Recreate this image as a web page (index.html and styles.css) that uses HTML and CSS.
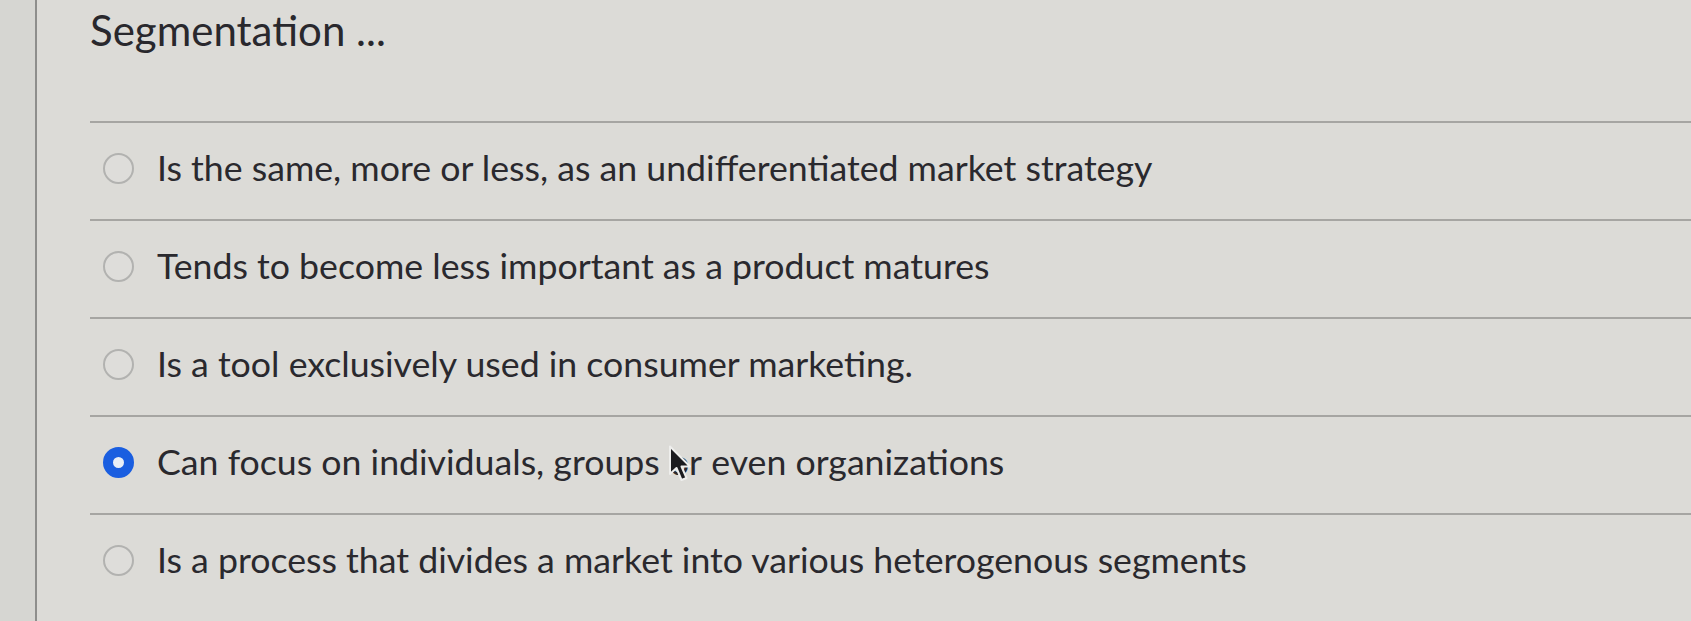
FILE: index.html
```html
<!DOCTYPE html>
<html lang="en">
<head>
<meta charset="utf-8">
<title>Segmentation</title>
<link rel="stylesheet" href="styles.css">
</head>
<body>
<div class="page">
  <div class="gutter"></div>
  <main class="question">
    <h1 class="title">Segmentation ...</h1>
    <ul class="options">
      <li class="option"><span class="radio"></span><span class="label">Is the same, more or less, as an undifferentiated market strategy</span></li>
      <li class="option"><span class="radio"></span><span class="label">Tends to become less important as a product matures</span></li>
      <li class="option"><span class="radio"></span><span class="label">Is a tool exclusively used in consumer marketing.</span></li>
      <li class="option"><span class="radio checked"></span><span class="label">Can focus on individuals, groups <span class="cursor-host">or<svg class="cursor" viewBox="0 0 24 38" width="24" height="38"><path d="M2 1.5 L2 29 L8.5 23 L13.5 35 L18.5 33 L13.5 21.5 L22 21.5 Z" fill="#1b1b1e" stroke="#eeeeec" stroke-width="2" stroke-linejoin="round"/></svg></span> even organizations</span></li>
      <li class="option"><span class="radio"></span><span class="label">Is a process that divides a market into various heterogenous segments</span></li>
    </ul>
  </main>
</div>
</body>
</html>
```
FILE: styles.css
```css
html, body {
  margin: 0;
  padding: 0;
}
body {
  background: #dcdbd7;
  font-family: Lato, "Open Sans", "Liberation Sans", sans-serif;
  color: #2a292e;
  width: 1691px;
  height: 621px;
  overflow: hidden;
}
.page {
  display: flex;
  height: 621px;
}
.gutter {
  width: 35px;
  flex: none;
  background: #d6d6d2;
  border-right: 2px solid #8e8e8c;
}
.question {
  flex: 1;
  padding-left: 53px;
}
.title {
  margin: 0;
  padding-top: 5px;
  height: 121px;
  box-sizing: border-box;
  font-size: 42px;
  line-height: 50px;
  font-weight: 400;
  color: #29282d;
}
.options {
  list-style: none;
  margin: 0;
  padding: 0;
}
.option {
  display: flex;
  align-items: center;
  gap: 23px;
  height: 98px;
  box-sizing: border-box;
  border-top: 2px solid #a6a5a2;
  padding: 23px 0 30px 13px;
}
.radio {
  flex: none;
  width: 31px;
  height: 31px;
  margin-top: 2px;
  box-sizing: border-box;
  border-radius: 50%;
  border: 2px solid #b2b2b0;
  background: #dedddA;
}
.radio.checked {
  border: 10px solid #1a5ee0;
  background: #e9eef6;
}
.label {
  font-size: 35.7px;
  line-height: 43px;
  white-space: nowrap;
}
.cursor-host {
  position: relative;
}
.cursor {
  position: absolute;
  left: -1px;
  top: 5px;
}
```
